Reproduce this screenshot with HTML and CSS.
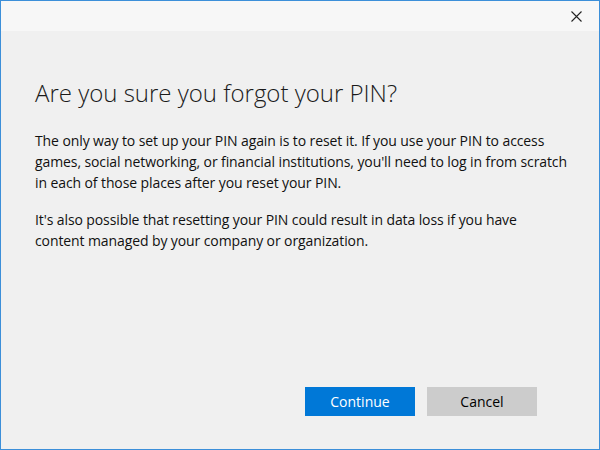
FILE: index.html
```html
<!doctype html>
<html lang="en">
<head>
  <meta charset="UTF-8">
  <title>Forgot PIN</title>
  <link rel="stylesheet" href="styles.css">
</head>
<body>
  <div class="window">
    <div class="titlebar">
      <span class="close">
        <svg width="11" height="11" viewBox="0 0 11 11"><path d="M0.5 0.5L10.5 10.5M10.5 0.5L0.5 10.5" stroke="#222" stroke-width="1.1" fill="none"/></svg>
      </span>
    </div>
    <div class="content">
      <h1>Are you sure you forgot your PIN?</h1>
      <p>The only way to set up your PIN again is to reset it. If you use your PIN to access games, social networking, or financial institutions, you'll need to log in from scratch in each of those places after you reset your PIN.</p>
      <p>It's also possible that resetting your PIN could result in data loss if you have content managed by your company or organization.</p>
      <div class="buttons">
        <button class="btn primary">Continue</button>
        <button class="btn">Cancel</button>
      </div>
    </div>
  </div>
</body>
</html>
```
FILE: styles.css
```css
html, body {
  margin: 0;
  padding: 0;
}

body {
  width: 600px;
  height: 450px;
  font-family: "Open Sans", "Noto Sans", sans-serif;
  color: #000;
}

.window {
  box-sizing: border-box;
  width: 600px;
  height: 450px;
  border: 1px solid #3c8fd9;
  background: #f0f0f0;
  display: flex;
  flex-direction: column;
}

.titlebar {
  height: 30px;
  background: #f7f7f7;
  display: flex;
  justify-content: flex-end;
  align-items: center;
}

.close {
  width: 46px;
  height: 30px;
  display: flex;
  align-items: center;
  justify-content: center;
}

.content {
  flex: 1;
  padding: 47px 34px 33px 34px;
  display: flex;
  flex-direction: column;
}

h1 {
  margin: 0 0 22px 0;
  font-size: 24px;
  font-weight: 300;
  line-height: 30px;
  color: #1a1a1a;
}

p {
  margin: 0 0 16px 0;
  font-size: 14px;
  line-height: 21px;
  letter-spacing: -0.1px;
  width: 532px;
  color: #111;
}

.buttons {
  margin-top: auto;
  display: flex;
  gap: 12px;
  padding-left: 270px;
}

.btn {
  width: 110px;
  height: 29px;
  border: none;
  background: #cccccc;
  font-family: inherit;
  font-size: 14px;
  color: #000;
  padding: 0;
}

.btn.primary {
  background: #0078d7;
  color: #fff;
}
```
